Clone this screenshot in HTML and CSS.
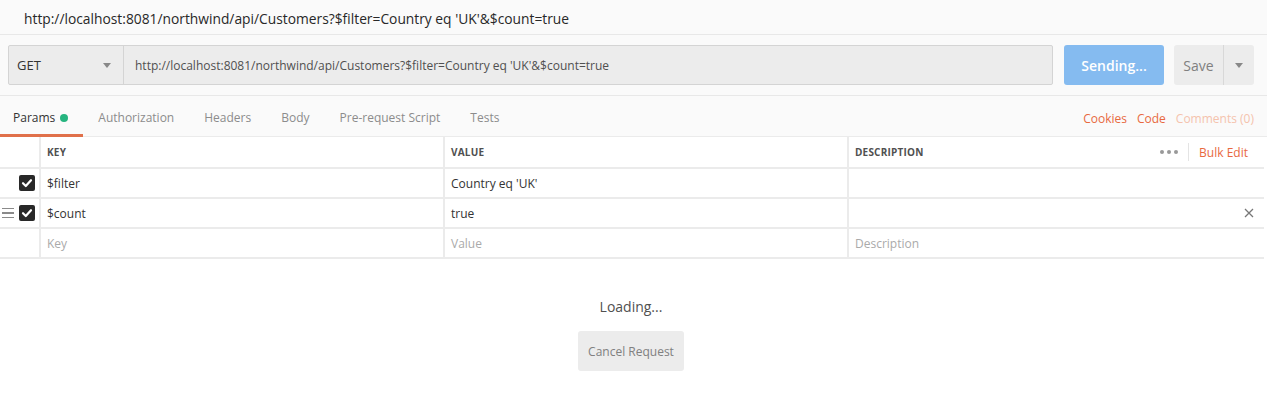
FILE: index.html
```html
<!DOCTYPE html>
<html>
<head>
<meta charset="utf-8">
<link rel="stylesheet" href="styles.css">
</head>
<body>
<div class="titlebar">http://localhost:8081/northwind/api/Customers?$filter=Country eq 'UK'&amp;$count=true</div>
<div class="reqbar">
  <div class="reqinput">
    <div class="method"><span>GET</span><span class="caret"></span></div>
    <div class="url">http://localhost:8081/northwind/api/Customers?$filter=Country eq 'UK'&amp;$count=true</div>
  </div>
  <div class="send">Sending...</div>
  <div class="save"><span class="save-label">Save</span><span class="save-drop"><span class="caret"></span></span></div>
</div>
<div class="tabs">
  <div class="tab active">Params <span class="dot"></span></div>
  <div class="tab">Authorization</div>
  <div class="tab">Headers</div>
  <div class="tab">Body</div>
  <div class="tab">Pre-request Script</div>
  <div class="tab">Tests</div>
  <div class="tabs-right">
    <span class="link">Cookies</span>
    <span class="link">Code</span>
    <span class="link faded">Comments (0)</span>
  </div>
</div>
<div class="table">
  <div class="row head">
    <div class="c0"></div>
    <div class="cell">KEY</div>
    <div class="cell">VALUE</div>
    <div class="cell desc">DESCRIPTION
      <span class="tools"><span class="dots"><i></i><i></i><i></i></span><span class="vsep"></span><span class="bulk">Bulk Edit</span></span>
    </div>
  </div>
  <div class="row">
    <div class="c0"><span class="cb"><svg width="16" height="16" viewBox="0 0 16 16"><path d="M4 8.2 L6.8 11 L12 5.2" fill="none" stroke="#fff" stroke-width="2.2" stroke-linecap="round" stroke-linejoin="round"/></svg></span></div>
    <div class="cell">$filter</div>
    <div class="cell">Country eq 'UK'</div>
    <div class="cell"></div>
  </div>
  <div class="row">
    <div class="c0"><span class="handle"><i></i><i></i><i></i></span><span class="cb"><svg width="16" height="16" viewBox="0 0 16 16"><path d="M4 8.2 L6.8 11 L12 5.2" fill="none" stroke="#fff" stroke-width="2.2" stroke-linecap="round" stroke-linejoin="round"/></svg></span></div>
    <div class="cell">$count</div>
    <div class="cell">true</div>
    <div class="cell desc"><span class="close"><svg width="10" height="10" viewBox="0 0 10 10"><path d="M1 1 L9 9 M9 1 L1 9" stroke="#777" stroke-width="1.3"/></svg></span></div>
  </div>
  <div class="row">
    <div class="c0"></div>
    <div class="cell ph">Key</div>
    <div class="cell ph">Value</div>
    <div class="cell ph">Description</div>
  </div>
</div>
<div class="loading">
  <div class="loading-text">Loading...</div>
  <div class="cancel">Cancel Request</div>
</div>
</body>
</html>
```
FILE: styles.css
```css
html, body { margin: 0; padding: 0; background: #fff; }
body { font-family: "Open Sans", "Liberation Sans", sans-serif; color: #333; width: 1267px; }

.titlebar {
  height: 34px; line-height: 37px; padding-left: 24px;
  background: #fafafa; border-bottom: 1px solid #e8e8e8;
  font-size: 13.8px; color: #282828; white-space: nowrap;
}

.reqbar {
  display: flex; align-items: stretch; gap: 0;
  padding: 10px 13px 10px 8px; background: #fafafa;
  border-bottom: 1px solid #e8e8e8; height: 40px;
}
.reqinput {
  display: flex; flex: 0 0 1045px; box-sizing: border-box;
  border: 1px solid #d4d4d4; border-radius: 2px; background: #ececec;
}
.method {
  flex: 0 0 115px; box-sizing: border-box; display: flex; align-items: center;
  justify-content: space-between; padding: 0 12px 0 8px;
  border-right: 1px solid #d4d4d4; font-size: 13px; color: #333;
}
.caret {
  width: 0; height: 0; border-left: 4px solid transparent; border-right: 4px solid transparent;
  border-top: 5px solid #888; display: inline-block;
}
.url {
  display: flex; align-items: center; padding-left: 11px;
  font-size: 12px; color: #505050; white-space: nowrap;
}
.send {
  margin-left: 11px; width: 100px; border-radius: 3px; background: #85bbf0;
  color: #fff; font-weight: 600; font-size: 14px;
  display: flex; align-items: center; justify-content: center;
}
.save {
  margin-left: 10px; width: 80px; border-radius: 3px; background: #ececec;
  display: flex; font-size: 14px; color: #808080;
}
.save-label { flex: 0 0 49px; display: flex; align-items: center; justify-content: center; border-right: 1px solid #d8d8d8; }
.save-drop { flex: 1; display: flex; align-items: center; justify-content: center; }

.tabs {
  display: flex; align-items: stretch; height: 40px;
  background: #fafafa; border-bottom: 1px solid #ebebeb;
  font-size: 12px; color: #8c8c8c;
}
.tab {
  display: flex; align-items: center; padding: 0 15px; box-sizing: border-box;
  border-bottom: 3px solid transparent; padding-top: 5px; margin-bottom: -1px;
}
.tab.active { color: #333; border-bottom-color: #e0704a; padding: 5px 15px 0 13px; }
.dot { display: inline-block; width: 8px; height: 8px; border-radius: 50%; background: #26b47f; margin-left: 5px; }
.tabs-right { margin-left: auto; display: flex; align-items: center; gap: 10px; padding-right: 13px; padding-top: 5px; font-size: 12px; }
.link { color: #e8693f; }
.link.faded { color: #f5c3ad; }

.table { width: 1264px; }
.row {
  display: grid; grid-template-columns: 39px 404px 404px 417px;
  height: 28px; border-bottom: 2px solid #ebebeb; font-size: 12px; color: #333;
}
.row.head { height: 30px; font-size: 10px; font-weight: 700; color: #505050; letter-spacing: 0.2px; }
.c0 { display: flex; align-items: center; justify-content: flex-end; padding-right: 4px; gap: 4px; }
.cell {
  border-left: 2px solid #ebebeb; display: flex; align-items: center;
  padding-left: 6px; white-space: nowrap;
}
.cell.ph { color: #aaa; }
.desc { position: relative; }
.tools { margin-left: auto; display: flex; align-items: center; height: 100%; padding-right: 16px; }
.dots { display: flex; gap: 3px; }
.dots i { width: 4px; height: 4px; border-radius: 50%; background: #999; display: block; }
.vsep { width: 1px; height: 18px; background: #e4e4e4; margin: 0 10px 0 10px; }
.bulk { font-size: 12px; font-weight: 400; color: #e8693f; letter-spacing: 0; }

.cb { width: 16px; height: 16px; border-radius: 2px; background: #282828; display: block; }
.cb svg { display: block; }
.handle { display: flex; flex-direction: column; gap: 3px; width: 12px; margin-right: 1px; }
.handle i { display: block; height: 1.5px; background: #8a8a8a; }
.close { margin-left: auto; margin-right: 10px; display: flex; }

.loading { width: 1262px; display: flex; flex-direction: column; align-items: center; padding-top: 38px; }
.loading-text { font-size: 14px; line-height: 20px; color: #505050; }
.cancel {
  margin-top: 14px; width: 106px; height: 40px; border-radius: 3px; background: #ececec;
  display: flex; align-items: center; justify-content: center; font-size: 12px; color: #808080;
}
```
